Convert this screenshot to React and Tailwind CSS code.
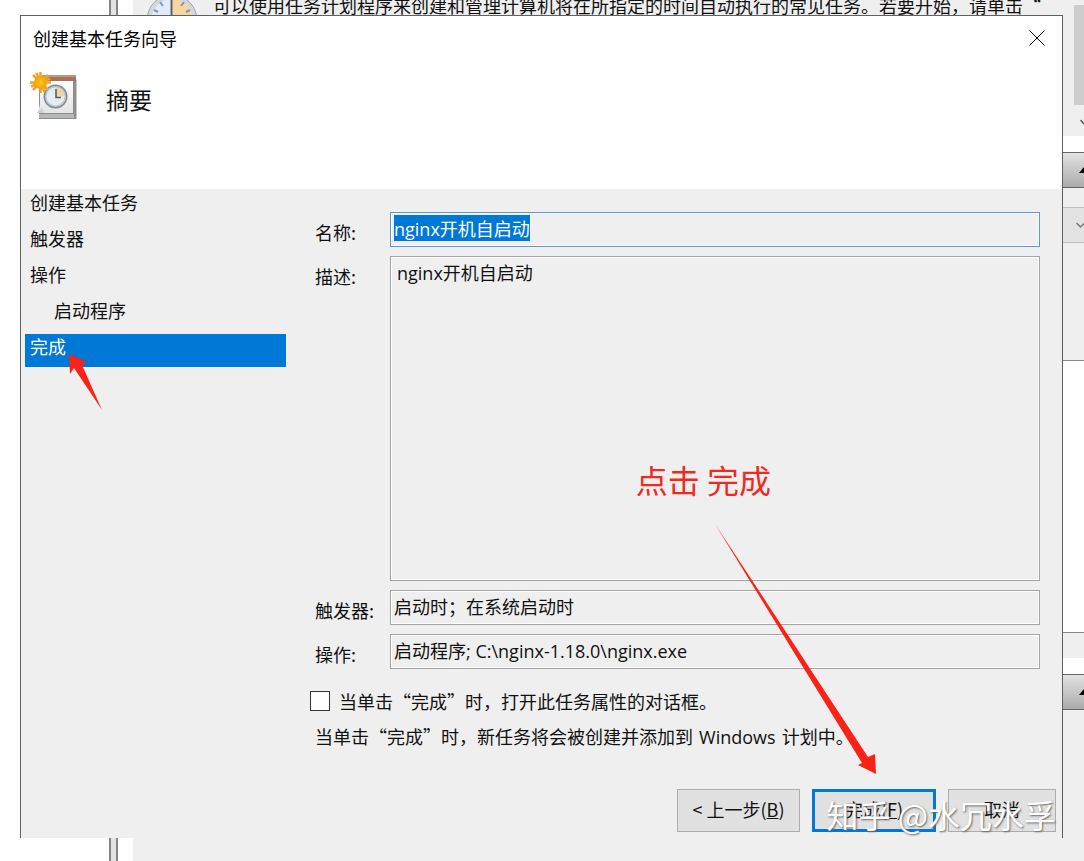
import { useEffect, useRef } from 'react';

const steps = [
  { name: '创建基本任务' },
  { name: '触发器' },
  { name: '操作' },
  { name: '启动程序', nested: true },
  { name: '完成', active: true },
];

const fieldClass =
  'w-full min-w-0 h-[35px] px-[3px] pb-[3px] border bg-[#efefef] shadow-[inset_0_0_0_1px_#fff] text-lg text-[#111] outline-none rounded-none';

const latin = "font-['Open_Sans','Noto_Sans_CJK_SC',sans-serif]";

const TaskIcon = () => (
  <svg viewBox="0 0 48 48" className="w-12 h-12 shrink-0" aria-hidden="true">
    <defs>
      <linearGradient id="paper" x1="0" y1="0" x2="0" y2="1">
        <stop offset="0" stopColor="#ffffff" />
        <stop offset="1" stopColor="#e4e4e4" />
      </linearGradient>
      <radialGradient id="sun">
        <stop offset="0" stopColor="#ffc81a" />
        <stop offset="1" stopColor="#f79f08" />
      </radialGradient>
    </defs>
    <path d="M9 8 H46.500 V47 H9 Z" fill="#8e8e8e" />
    <path d="M9 42 H44 V46 H9 Z" fill="#b5b8b8" />
    <path d="M10 8 H43 V41 H6.500 Q10 37 10 31 Z" fill="url(#paper)" />
    <path d="M6.500 41 L12 36 L14 41 Z" fill="#d0d0d0" />
    <path d="M12 3 H46 V9 H12 Z" fill="#a9705a" />
    <path d="M12 3 H46 V5 H12 Z" fill="#c19480" />
    <circle cx="25.500" cy="24.500" r="12" fill="#858b90" />
    <circle cx="25.500" cy="24.500" r="10.500" fill="#c5c9cc" />
    <circle cx="25.500" cy="24.500" r="9" fill="#e3edf8" />
    <path d="M25.500 24.500 V15.500 A9 9 0 0 1 34.500 24.500 Z" fill="#f4d49b" />
    <path d="M26 17 V25.500 H31" fill="none" stroke="#53585e" strokeWidth="1.500" />
    <g stroke="#eea42c" strokeWidth="2.500">
      <path d="M10.500 0 V21 M0 10.500 H21 M3 3 L18 18 M18 3 L3 18 M6.500 1 L14.500 20 M1 14.500 L20 6.500" />
    </g>
    <circle cx="10.500" cy="10.500" r="6.500" fill="url(#sun)" />
  </svg>
);

const ClockIcon = () => (
  <svg viewBox="0 0 52 52" className="w-[52px] h-[52px] shrink-0" aria-hidden="true">
    <circle cx="26" cy="26" r="25" fill="#d3d6dc" stroke="#a4a9b2" />
    <circle cx="26" cy="26" r="21" fill="#e3ebf7" />
    <path d="M26 26 V5 A21 21 0 0 1 47 26 Z" fill="#f6d79f" />
    <path d="M25.500 5 V26" stroke="#5c6170" strokeWidth="2" />
    <path d="M8 16 L12 18 M14 8 L17 12 M44 16 L40 18 M38 8 L35 12" stroke="#7c93c4" strokeWidth="2" />
  </svg>
);

const PaneHeader = () => (
  <div className="h-[36px] flex items-center justify-end border-y border-[#666] bg-linear-to-b from-[#e2e2e2] to-[#acacac]">
    <svg viewBox="0 0 5 6" className="w-[5px] h-[6px]" aria-hidden="true">
      <path d="M0 6 L5 0 V6 Z" fill="#000" />
    </svg>
  </div>
);

// Task Scheduler main window, mostly hidden by the wizard
const BackgroundWindow = () => (
  <div className="absolute inset-0 flex overflow-hidden bg-white">
    <div className="w-[109px] shrink-0" />
    <div className="w-[9px] shrink-0 border-x-2 border-[#858585] bg-[#e3e3e3]" />
    <div className="ml-[15px] flex-1 min-w-0 bg-[#efefef]">
      <div className="h-[15px] pl-[13px] flex items-start gap-[15px] overflow-hidden">
        <div className="-mt-[6px]">
          <ClockIcon />
        </div>
        <p className="-mt-2 text-lg leading-[26px] whitespace-nowrap text-[#111]">
          可以使用任务计划程序来创建和管理计算机将在所指定的时间自动执行的常见任务。若要开始，请单击“
        </p>
      </div>
    </div>
    <div className="w-[22px] shrink-0 flex flex-col bg-[#efefef]">
      <div className="h-[136px] pt-[5px] flex flex-col items-end">
        <div className="w-[10px] h-[100px] bg-[#cdcdcd]" />
        <svg viewBox="0 0 4 6" className="mt-[14px] w-1 h-[6px]" aria-hidden="true">
          <path d="M0.500 1 L4 5" fill="none" stroke="#555" strokeWidth="1.500" />
        </svg>
      </div>
      <div className="h-4 bg-white" />
      <PaneHeader />
      <div className="mt-[19px] h-[36px] flex items-center justify-end border-y border-[#bfbfbf] bg-[#e3e3e3]">
        <svg viewBox="0 0 8 6" className="w-2 h-[6px]" aria-hidden="true">
          <path d="M0.500 1 L4.500 5 L8 1.500" fill="none" stroke="#777" strokeWidth="1.500" />
        </svg>
      </div>
      <div className="h-[117px]" />
      <div className="h-[273px] border-y border-[#8a8a8a] bg-white" />
      <div className="h-[25px]" />
      <div className="h-4 bg-white" />
      <PaneHeader />
    </div>
  </div>
);

function Wizard() {
  const nameRef = useRef(null);

  useEffect(() => {
    nameRef.current.focus();
    nameRef.current.select();
  }, []);

  return (
    <div className="relative border border-b-0 border-[#606060] bg-[#efefef] text-lg text-[#111]">
      {/* Title bar */}
      <div className="h-[44px] pl-3 pr-[17px] flex items-center justify-between bg-white">
        <h1 className="text-lg leading-[26px] text-black">创建基本任务向导</h1>
        <button type="button" aria-label="关闭" className="w-4 h-4">
          <svg viewBox="0 0 16 16" className="w-4 h-4" aria-hidden="true">
            <path d="M0.500 0.500 L15.500 15.500 M15.500 0.500 L0.500 15.500" stroke="#000" />
          </svg>
        </button>
      </div>

      {/* Page heading */}
      <div className="h-[129px] pl-[9px] pt-3 flex items-start gap-7 bg-white">
        <TaskIcon />
        <h2 className="pt-2 text-[23px] leading-[38px]">摘要</h2>
      </div>

      <div className="flex">
        {/* Steps */}
        <ol className="ml-1 pt-px w-[261px] shrink-0 flex flex-col gap-[3px]">
          {steps.map((step) => (
            <li
              key={step.name}
              aria-current={step.active ? 'step' : undefined}
              className={`h-[33px] leading-[24px] ${step.nested ? 'pl-[29px]' : 'pl-[5px]'} ${step.active ? 'bg-[#0078d7] text-white' : ''}`}
            >
              {step.name}
            </li>
          ))}
        </ol>

        <form className="ml-6 pt-[23px] pr-[6px] pb-[6px] flex-1 min-w-0" onSubmit={(e) => e.preventDefault()}>
          <div className="pl-[5px] pr-4 grid grid-cols-[75px_1fr] gap-y-[9px]">
            <label htmlFor="name" className="pt-[6px] leading-[28px]">名称:</label>
            <input
              id="name"
              ref={nameRef}
              readOnly
              defaultValue="nginx开机自启动"
              className={`${fieldClass} ${latin} border-[#5b9bd0] selection:bg-[#0078d7] selection:text-white`}
            />
            <label htmlFor="description" className="pt-[6px] leading-[28px]">描述:</label>
            <textarea
              id="description"
              readOnly
              defaultValue="nginx开机自启动"
              className={`${latin} block w-full h-[325px] px-[6px] py-[3px] leading-[26px] resize-none outline-none border border-[#a5a5a5] bg-[#efefef] shadow-[inset_0_0_0_1px_#fff]`}
            />
            <label htmlFor="trigger" className="pt-[6px] leading-[28px]">触发器:</label>
            <input
              id="trigger"
              readOnly
              defaultValue="启动时；在系统启动时"
              className={`${fieldClass} border-[#a5a5a5]`}
            />
            <label htmlFor="action" className="pt-[6px] leading-[28px]">操作:</label>
            <input
              id="action"
              readOnly
              defaultValue="启动程序; C:\nginx-1.18.0\nginx.exe"
              className={`${fieldClass} ${latin} border-[#a5a5a5]`}
            />
          </div>

          <div className="mt-[19px] flex items-center gap-[9px]">
            <input
              id="open-properties"
              type="checkbox"
              className="w-5 h-5 shrink-0 appearance-none border border-[#333] bg-white checked:bg-[#0078d7]"
            />
            <label htmlFor="open-properties" className="leading-[26px]">
              当单击“完成”时，打开此任务属性的对话框。
            </label>
          </div>
          <p className="mt-[9px] pl-[5px] leading-[26px]">
            当单击“完成”时，新任务将会被创建并添加到 <span className={`${latin} mx-0.5`}>Windows</span> 计划中。
          </p>

          <div className="mt-[39px] flex justify-end gap-3">
            <button type="button" className="w-[123px] h-[43px] pb-1 border border-[#adadad] bg-[#e1e1e1]">
              &lt; 上一步(<u>B</u>)
            </button>
            <button type="submit" className="w-[124px] h-[43px] pb-1 border-3 border-[#0078d7] bg-[#e1e1e1]">
              完成(<u>F</u>)
            </button>
            <button type="button" className="w-[108px] h-[43px] pb-1 border border-[#adadad] bg-[#e1e1e1]">
              取消
            </button>
          </div>
        </form>
      </div>

      {/* Annotations */}
      <svg viewBox="0 0 34 56" className="absolute left-12 top-[338px] w-[34px] h-[56px]" aria-hidden="true">
        <path d="M0 0 L18 8 L13 11 L33 56 L5 14 L1 20 Z" fill="#fb2317" />
      </svg>
      <svg viewBox="0 0 162 250" className="absolute right-[185px] bottom-[64px] w-[162px] h-[250px]" aria-hidden="true">
        <path d="M0 0 L153 233 L160 230 L161 250 L143 241 L147 239 Z" fill="#f92216" />
      </svg>
      <p className="absolute right-[291px] bottom-[336px] text-[32px] leading-[46px] text-[#ef2a20]">点击 完成</p>
      <p className="absolute right-[6px] bottom-px text-[32px] leading-[46px] whitespace-nowrap text-white pointer-events-none [text-shadow:1px_1px_2px_#666]">
        知乎 @水冗水孚
      </p>
    </div>
  );
}

function App() {
  return (
    <div className="relative min-h-screen pt-[15px] pr-[21px] pb-[23px] pl-5 font-['Noto_Sans_CJK_SC',sans-serif]">
      <BackgroundWindow />
      <Wizard />
    </div>
  );
}

export default App;
